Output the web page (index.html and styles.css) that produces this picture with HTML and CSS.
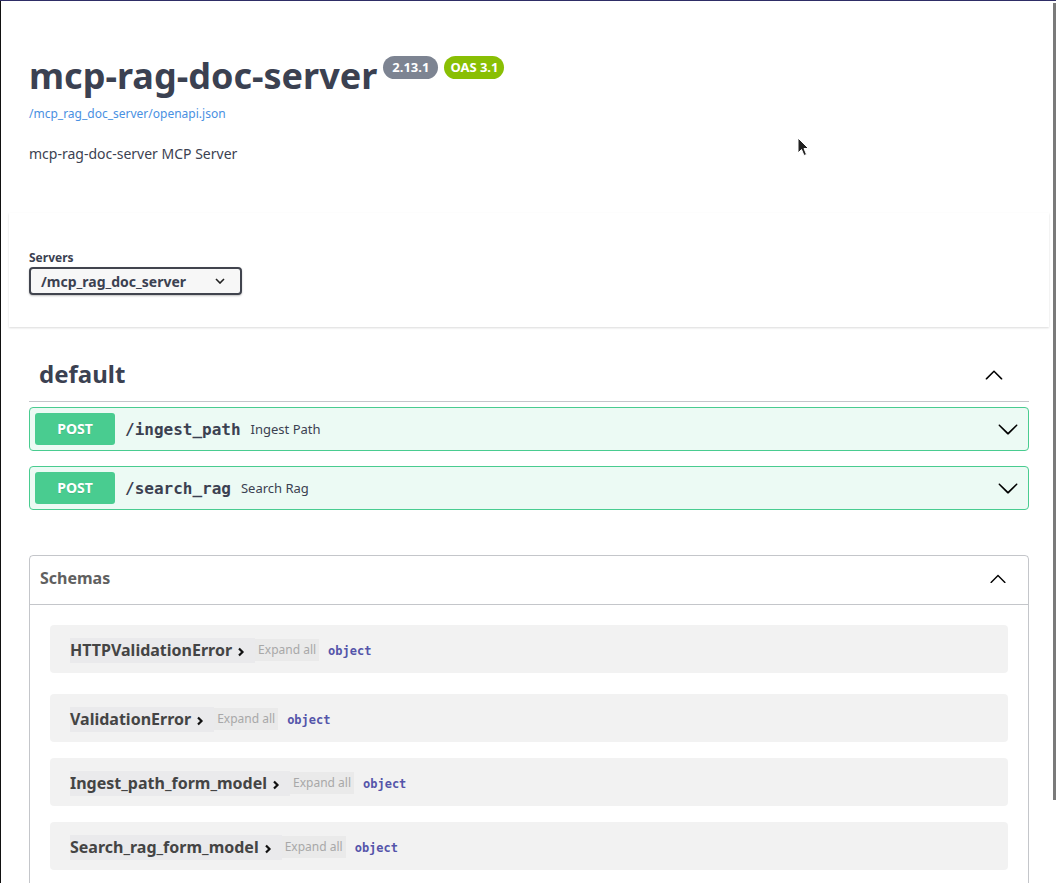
FILE: index.html
```html
<!DOCTYPE html>
<html lang="en">
<head>
<meta charset="utf-8">
<title>mcp-rag-doc-server</title>
<link rel="stylesheet" href="styles.css">
</head>
<body>
<div class="frame">
  <div class="page">
    <div class="wrapper info">
      <div class="title-row">
        <h2 class="title">mcp-rag-doc-server</h2>
        <span class="badge ver">2.13.1</span>
        <span class="badge oas">OAS 3.1</span>
      </div>
      <a class="url" href="#">/mcp_rag_doc_server/openapi.json</a>
      <p class="desc">mcp-rag-doc-server MCP Server</p>
    </div>

    <div class="scheme">
      <div class="wrapper">
        <div class="servers-label">Servers</div>
        <div class="select">
          <span>/mcp_rag_doc_server</span>
          <svg class="sel-arrow" width="10" height="6" viewBox="0 0 10 6"><polyline points="1,1 5,5 9,1" fill="none" stroke="#222" stroke-width="1.6"/></svg>
        </div>
      </div>
    </div>

    <div class="wrapper">
      <div class="tag-section">
        <div class="tag-head">
          <h3 class="tag-name">default</h3>
          <svg class="tag-arrow" width="22" height="22" viewBox="0 0 20 20"><path d="M17.418 14.908c-.271.271-.71.271-.981 0L10 8.471l-6.437 6.437c-.271.271-.71.271-.981 0s-.271-.71 0-.981l6.927-6.927c.271-.271.71-.271.981 0l6.927 6.927c.272.271.272.711.001.981z"/></svg>
        </div>
        <div class="opblock">
          <span class="method">POST</span>
          <span class="path">/ingest_path</span>
          <span class="op-desc">Ingest Path</span>
          <svg class="op-arrow" width="22" height="22" viewBox="0 0 20 20"><path d="M17.418 6.109c.272-.268.709-.268.979 0s.271.701 0 .969l-7.908 7.830c-.27.268-.707.268-.979 0l-7.908-7.830c-.27-.268-.27-.701 0-.969.271-.268.709-.268.979 0L10 13.250l7.418-7.141z"/></svg>
        </div>
        <div class="opblock">
          <span class="method">POST</span>
          <span class="path">/search_rag</span>
          <span class="op-desc">Search Rag</span>
          <svg class="op-arrow" width="22" height="22" viewBox="0 0 20 20"><path d="M17.418 6.109c.272-.268.709-.268.979 0s.271.701 0 .969l-7.908 7.830c-.27.268-.707.268-.979 0l-7.908-7.830c-.27-.268-.27-.701 0-.969.271-.268.709-.268.979 0L10 13.250l7.418-7.141z"/></svg>
        </div>
      </div>

      <section class="models">
        <h4 class="models-head">
          <span>Schemas</span>
          <svg class="models-arrow" width="20" height="20" viewBox="0 0 20 20"><path d="M17.418 14.908c-.271.271-.71.271-.981 0L10 8.471l-6.437 6.437c-.271.271-.71.271-.981 0s-.271-.71 0-.981l6.927-6.927c.271-.271.71-.271.981 0l6.927 6.927c.272.271.272.711.001.981z"/></svg>
        </h4>
        <div class="models-body">
          <div class="model first">
            <span class="model-title">HTTPValidationError<svg class="chev" width="8" height="10" viewBox="0 0 8 10"><polyline points="2,1.5 5.5,5 2,8.5" fill="none" stroke="#111" stroke-width="2.2"/></svg></span>
            <span class="expand">Expand all</span>
            <span class="type">object</span>
          </div>
          <div class="model">
            <span class="model-title">ValidationError<svg class="chev" width="8" height="10" viewBox="0 0 8 10"><polyline points="2,1.5 5.5,5 2,8.5" fill="none" stroke="#111" stroke-width="2.2"/></svg></span>
            <span class="expand">Expand all</span>
            <span class="type">object</span>
          </div>
          <div class="model">
            <span class="model-title">Ingest_path_form_model<svg class="chev" width="8" height="10" viewBox="0 0 8 10"><polyline points="2,1.5 5.5,5 2,8.5" fill="none" stroke="#111" stroke-width="2.2"/></svg></span>
            <span class="expand">Expand all</span>
            <span class="type">object</span>
          </div>
          <div class="model">
            <span class="model-title">Search_rag_form_model<svg class="chev" width="8" height="10" viewBox="0 0 8 10"><polyline points="2,1.5 5.5,5 2,8.5" fill="none" stroke="#111" stroke-width="2.2"/></svg></span>
            <span class="expand">Expand all</span>
            <span class="type">object</span>
          </div>
        </div>
      </section>
    </div>

    <svg class="cursor" width="13" height="20" viewBox="0 0 13 20"><path d="M1 1 L1 16 L4.5 12.5 L7 18.5 L9.5 17.5 L7 11.5 L11.5 11.5 Z" fill="#222" stroke="#fff" stroke-width="1"/></svg>
  </div>
  <div class="scrollbar"></div>
</div>
</body>
</html>
```
FILE: styles.css
```css
* { box-sizing: border-box; }

html, body {
  margin: 0;
  height: 883px;
  overflow: hidden;
  background: #fff;
}

body {
  font-family: "Noto Sans", "Open Sans", sans-serif;
  color: #3b4151;
  border-top: 1px solid #2e2d66;
}

.frame {
  display: flex;
  height: 882px;
}

.page {
  width: 1053px;
  border-left: 1px solid #111;
  padding: 0 4px 0 8px;
  position: relative;
}

.scrollbar {
  width: 3px;
  margin-top: 2px;
  height: 797px;
  background: #7a7a7a;
}

.wrapper {
  padding: 0 20px;
}

/* info */
.info {
  margin: 50px 0;
}

.title-row {
  display: flex;
  align-items: flex-start;
}

.title {
  margin: 0;
  font-size: 36px;
  line-height: 49px;
  font-weight: 700;
  color: #3b4151;
}

.badge {
  margin-top: 5px;
  margin-left: 6px;
  border-radius: 57px;
  color: #fff;
  font-size: 13px;
  font-weight: 700;
  line-height: 17px;
  padding: 3px 7px;
}

.ver {
  background: #7d8492;
  padding: 3px 9px;
}

.oas {
  background: #89bf04;
  padding: 3px 6px;
}

.url {
  display: block;
  margin-top: 6px;
  font-size: 12px;
  line-height: 16px;
  color: #4990e2;
  text-decoration: none;
}

.desc {
  margin: 22px 0 0;
  font-size: 14px;
  line-height: 19px;
}

/* servers */
.scheme {
  background: #fff;
  box-shadow: 0 1px 2px 0 rgba(0, 0, 0, .15);
  padding: 30px 0 32px;
  margin-bottom: 20px;
}

.servers-label {
  margin-top: 7px;
  font-size: 12px;
  line-height: 16px;
  font-weight: 700;
}

.select {
  margin-top: 1px;
  width: 213px;
  height: 28px;
  display: flex;
  align-items: center;
  justify-content: space-between;
  padding: 0 15px 0 10px;
  border: 2px solid #41444e;
  border-radius: 4px;
  background: #f7f7f7;
  box-shadow: 0 1px 2px 0 rgba(0, 0, 0, .25);
  font-size: 14px;
  font-weight: 700;
}

/* operations */
.tag-section {
  display: flex;
  flex-direction: column;
}

.tag-head {
  display: flex;
  align-items: center;
  justify-content: space-between;
  padding: 10px 24px 10px 10px;
  border-bottom: 1px solid rgba(59, 65, 81, .3);
  margin-bottom: 5px;
}

.tag-name {
  margin: 0;
  font-size: 24px;
  line-height: 34px;
  font-weight: 700;
}

.opblock {
  display: flex;
  align-items: center;
  padding: 5px;
  border: 1px solid #49cc90;
  border-radius: 4px;
  background: rgba(73, 204, 144, .1);
  margin-bottom: 15px;
}

.method {
  width: 80px;
  padding: 6px 0;
  line-height: 20px;
  text-align: center;
  border-radius: 3px;
  background: #49cc90;
  color: #fff;
  font-size: 14px;
  font-weight: 700;
  text-shadow: 0 1px 0 rgba(0, 0, 0, .1);
}

.path {
  padding: 0 10px;
  font-family: "DejaVu Sans Mono", monospace;
  font-size: 16px;
  font-weight: 700;
}

.op-desc {
  flex: 1;
  font-size: 13px;
}

.op-arrow {
  margin-right: 4px;
}

/* models */
.models {
  margin: 30px 0;
  border: 1px solid rgba(59, 65, 81, .3);
  border-radius: 4px;
  height: 400px;
}

.models-head {
  margin: 0;
  height: 49px;
  display: flex;
  align-items: center;
  justify-content: space-between;
  padding: 0 20px 5px 10px;
  border-bottom: 1px solid rgba(59, 65, 81, .3);
  font-size: 16px;
  line-height: 22px;
  font-weight: 700;
  color: #606060;
}

.models-body {
  padding-top: 20px;
}

.model {
  height: 48px;
  margin: 0 20px 16px;
  padding: 0 20px;
  display: flex;
  align-items: center;
  border-radius: 4px;
  background: rgba(0, 0, 0, .05);
}

.model.first {
  margin-bottom: 21px;
}

.model-title {
  display: flex;
  align-items: center;
  height: 25px;
  margin-top: 2px;
  background: rgba(40, 40, 110, .04);
  font-size: 16px;
  font-weight: 700;
  color: #444;
}

.chev {
  margin: 3px 10px 0 5px;
}

.expand {
  height: 22px;
  line-height: 22px;
  margin-top: 2px;
  padding: 0 3px;
  background: rgba(0, 0, 0, .03);
  color: #a8a8a8;
  font-size: 12px;
}

.type {
  margin-left: 9px;
  margin-top: 4px;
  font-family: "DejaVu Sans Mono", monospace;
  font-size: 12px;
  font-weight: 700;
  color: #55a;
}

.cursor {
  position: absolute;
  left: 796px;
  top: 136px;
}
```
